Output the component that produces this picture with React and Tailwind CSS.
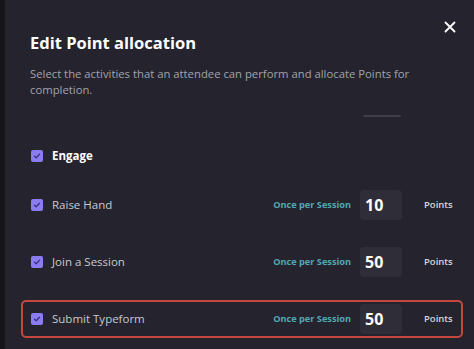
import React from "react";

function Check() {
  return (
    <span className="flex h-[12px] w-[12px] items-center justify-center rounded-[2px] bg-[#8b7cf2]">
      <svg width="8" height="8" viewBox="0 0 8 8" fill="none">
        <path d="M1.5 4.2 L3.2 5.8 L6.5 2.2" stroke="#3b3478" strokeWidth="1.3" strokeLinecap="round" strokeLinejoin="round" />
      </svg>
    </span>
  );
}

function Row({ label, value, highlight }) {
  return (
    <div
      className={
        "flex h-[38px] items-center rounded-[5px] border-2 pl-[8px] pr-[8px] " +
        (highlight ? "border-[#c4483e]" : "border-transparent")
      }
    >
      <Check />
      <span className="ml-[9px] text-[11.5px] text-[#c9c8d0]">{label}</span>
      <span className="ml-auto text-[9.2px] font-bold text-[#4ea9b4]">Once per Session</span>
      <div className="ml-[9px] flex h-[30px] w-[42px] items-center rounded-[4px] bg-[#2e2d38] pl-[5px] text-[16px] font-bold text-white">
        {value}
      </div>
      <span className="ml-[22px] w-[29px] text-[9.5px] font-semibold text-[#d6d5dc]">Points</span>
    </div>
  );
}

export default function App() {
  return (
    <div
      className="flex h-[349px] w-[474px] overflow-hidden bg-[#25242e]"
      style={{ fontFamily: '"Open Sans", "Noto Sans", sans-serif' }}
    >
      <div className="h-full w-[5px] bg-[#151419]" />
      <div className="relative flex flex-1 flex-col pl-[16px] pt-[31px]">
        <button className="absolute right-[18px] top-[21px] p-0">
          <svg width="12" height="12" viewBox="0 0 12 12">
            <path d="M1.5 1.5 L10.5 10.5 M10.5 1.5 L1.5 10.5" stroke="#ffffff" strokeWidth="1.8" strokeLinecap="round" />
          </svg>
        </button>
        <h1 className="pl-[9px] text-[16.5px] font-bold leading-[24px] text-white">Edit Point allocation</h1>
        <p className="mt-[11px] w-[420px] pl-[9px] text-[11.3px] leading-[16px] text-[#a3a2ad]">
          Select the activities that an attendee can perform and allocate Points for completion.
        </p>
        <div className="ml-[342px] mt-[17px] h-[2px] w-[38px] rounded-full bg-[#3f3e49]" />
        <div className="mt-[20px] flex h-[38px] items-center pl-[10px]">
          <Check />
          <span className="ml-[9px] text-[11.5px] font-bold text-white">Engage</span>
        </div>
        <div className="mt-[11px] flex w-[442px] flex-col gap-[19px]">
          <Row label="Raise Hand" value="10" />
          <Row label="Join a Session" value="50" />
          <Row label="Submit Typeform" value="50" highlight />
        </div>
      </div>
    </div>
  );
}
